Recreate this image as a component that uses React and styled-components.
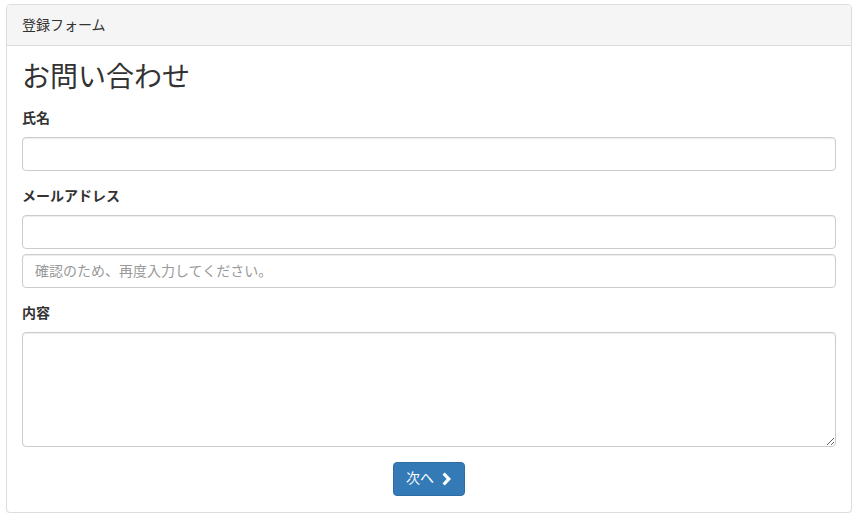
import styled, { createGlobalStyle } from 'styled-components';

const Global = createGlobalStyle`
    html, body {
        margin: 0;
        padding: 0;
        background: #fff;
    }
    body {
        font-family: "Liberation Sans", Arial, "Noto Sans CJK JP", sans-serif;
        font-size: 14px;
        line-height: 1.42857;
        color: #333;
    }
    * {
        box-sizing: border-box;
    }
`;

const Page = styled.div`
    padding: 4px 10px 0 6px;
`;

const Panel = styled.div`
    border: 1px solid #ddd;
    border-radius: 4px;
    background: #fff;
    box-shadow: 0 1px 1px rgba(0, 0, 0, 0.05);
`;

const PanelHeading = styled.div`
    padding: 10px 15px;
    background: #f5f5f5;
    border-bottom: 1px solid #ddd;
    border-radius: 3px 3px 0 0;
    font-size: 14px;
    line-height: 20px;
`;

const PanelBody = styled.form`
    padding: 15px 15px 16px;
`;

const Title = styled.h2`
    margin: 0 0 14px;
    font-size: 28px;
    font-weight: 400;
    line-height: 33px;
`;

const Group = styled.div`
    margin-bottom: 15px;
    display: flex;
    flex-direction: column;
    gap: 5px;
`;

const Label = styled.label`
    display: block;
    font-weight: 700;
    line-height: 20px;
    margin-bottom: 4px;
`;

const Input = styled.input`
    display: block;
    width: 100%;
    height: 34px;
    padding: 6px 12px;
    font: inherit;
    color: #555;
    background: #fff;
    border: 1px solid #ccc;
    border-radius: 4px;
    box-shadow: inset 0 1px 1px rgba(0, 0, 0, 0.075);
    &::placeholder {
        color: #999;
    }
`;

const TextArea = styled.textarea`
    display: block;
    width: 100%;
    height: 115px;
    padding: 6px 12px;
    font: inherit;
    color: #555;
    border: 1px solid #ccc;
    border-radius: 4px;
    box-shadow: inset 0 1px 1px rgba(0, 0, 0, 0.075);
`;

const Actions = styled.div`
    display: flex;
    justify-content: center;
`;

const Button = styled.button`
    display: inline-flex;
    align-items: center;
    gap: 6px;
    height: 34px;
    padding: 6px 12px;
    font: inherit;
    color: #fff;
    background: #337ab7;
    border: 1px solid #2e6da4;
    border-radius: 4px;
    cursor: pointer;
`;

function Chevron() {
    return (
        <svg width="12" height="14" viewBox="0 0 12 14" aria-hidden="true">
            <polygon points="2.5,2.5 4.8,0.4 11,7 4.8,13.6 2.5,11.5 6.6,7" fill="#fff" />
        </svg>
    );
}

export default function App() {
    return (
        <Page>
            <Global />
            <Panel>
                <PanelHeading>登録フォーム</PanelHeading>
                <PanelBody onSubmit={(e) => e.preventDefault()}>
                    <Title>お問い合わせ</Title>
                    <Group>
                        <Label>氏名</Label>
                        <Input type="text" />
                    </Group>
                    <Group>
                        <Label>メールアドレス</Label>
                        <Input type="email" />
                        <Input type="email" placeholder="確認のため、再度入力してください。" />
                    </Group>
                    <Group>
                        <Label>内容</Label>
                        <TextArea />
                    </Group>
                    <Actions>
                        <Button type="submit">
                            次へ
                            <Chevron />
                        </Button>
                    </Actions>
                </PanelBody>
            </Panel>
        </Page>
    );
}
